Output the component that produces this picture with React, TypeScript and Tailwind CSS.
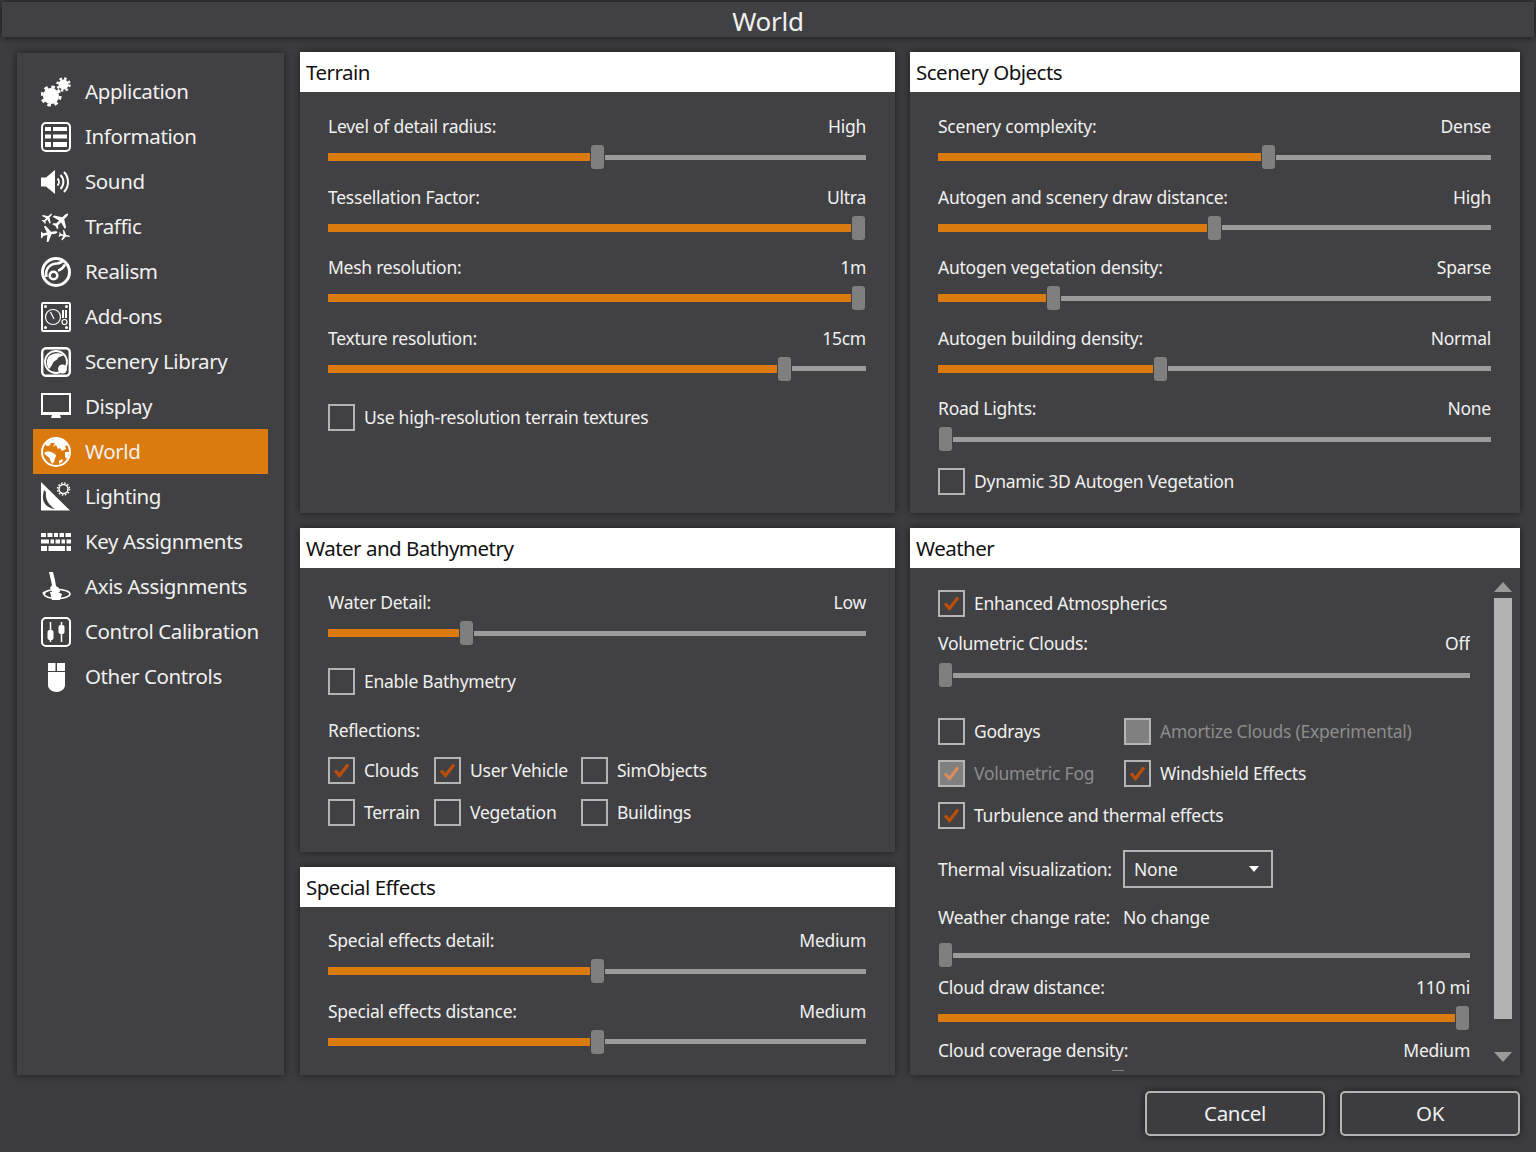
import { ReactNode } from "react";

type Row = { label: string; value: string; fill: number };

const PlaneIcon = ({ x, y, s, r }: { x: number; y: number; s: number; r: number }) => (
    <path
        transform={`translate(${x} ${y}) rotate(${r}) scale(${s})`}
        fill="white"
        d="M0 -9C1 -9 1.3 -7 1.3 -5V-2.5L8.5 2V4L1.3 2V6L3.5 8V9.5L0 8.5L-3.5 9.5V8L-1.3 6V2L-8.5 4V2L-1.3 -2.5V-5C-1.3 -7 -1 -9 0 -9Z"
    />
);

const Svg = ({ children }: { children: ReactNode }) => (
    <svg width="30" height="30" viewBox="0 0 30 30" className="shrink-0">
        {children}
    </svg>
);

const icons: Record<string, ReactNode> = {
    Application: (
        <Svg>
            <circle cx="10" cy="19" r="8" fill="white" />
            <circle cx="10" cy="19" r="9.200" fill="none" stroke="white" strokeWidth="2.800" strokeDasharray="3.600 3.630" />
            <circle cx="22.500" cy="7.500" r="5" fill="white" />
            <circle cx="22.500" cy="7.500" r="6" fill="none" stroke="white" strokeWidth="2.400" strokeDasharray="2.400 2.310" />
        </Svg>
    ),
    Information: (
        <Svg>
            <rect x="1" y="1" width="28" height="28" rx="4" fill="none" stroke="white" strokeWidth="2" />
            <path fill="white" d="M4 5H10V9H4ZM12 5H26V9H12ZM4 12.500H10V16.500H4ZM12 12.500H26V16.500H12ZM4 20H10V25H4ZM12 20H26V25H12Z" />
        </Svg>
    ),
    Sound: (
        <Svg>
            <path fill="white" d="M0 10.500H5L14 3V27L5 19.500H0Z" />
            <g fill="none" stroke="white" strokeWidth="2">
                <path d="M16.500 11.500A5 5 0 0 1 16.500 18.500" />
                <path d="M19.500 8A10 10 0 0 1 19.500 22" />
                <path d="M23 5A14.500 14.500 0 0 1 23 25" />
            </g>
        </Svg>
    ),
    Traffic: (
        <Svg>
            <PlaneIcon x={6.700} y={6} s={0.65} r={45} />
            <PlaneIcon x={20.500} y={8} s={1} r={45} />
            <PlaneIcon x={8} y={21.500} s={0.95} r={80} />
            <PlaneIcon x={23.500} y={23.500} s={0.6} r={100} />
        </Svg>
    ),
    Realism: (
        <Svg>
            <circle cx="15" cy="15" r="13.500" fill="none" stroke="white" strokeWidth="3" />
            <g fill="none" stroke="white" strokeWidth="2.600">
                <path d="M5.500 20C3.500 11 10 6.500 16 6.500C19 6.500 21 5 22.500 3" />
                <path d="M17 13.500C19.500 13 22 11 24 7.500" />
                <circle cx="12.500" cy="18.500" r="3.800" />
            </g>
        </Svg>
    ),
    "Add-ons": (
        <Svg>
            <rect x="1" y="1" width="28" height="28" rx="1" fill="none" stroke="white" strokeWidth="2" />
            <g fill="white">
                <circle cx="4.500" cy="4.500" r="1.500" />
                <circle cx="25.500" cy="4.500" r="1.500" />
                <circle cx="4.500" cy="25.500" r="1.500" />
                <circle cx="25.500" cy="25.500" r="1.500" />
                <rect x="21" y="8" width="2" height="8" />
                <rect x="24" y="8" width="2" height="8" />
            </g>
            <g fill="none" stroke="white" strokeWidth="1.200">
                <circle cx="12" cy="15" r="7.500" />
                <path d="M9.500 10L13 17" />
                <circle cx="23.500" cy="20" r="2.500" />
            </g>
        </Svg>
    ),
    "Scenery Library": (
        <Svg>
            <rect x="1.200" y="1.200" width="27.600" height="27.600" rx="4" fill="none" stroke="white" strokeWidth="2.400" />
            <circle cx="15" cy="15" r="11" fill="none" stroke="white" strokeWidth="1.800" />
            <path fill="white" d="M8 9C12 6 18 5 23 8C21 10 18 9 17 11C16 14 13 13 12 16C11 18 10 20 8 22C5 18 5 13 8 9Z" />
            <circle cx="21.500" cy="22" r="4.500" fill="white" />
        </Svg>
    ),
    Display: (
        <Svg>
            <rect x="1" y="2" width="28" height="19" fill="none" stroke="white" strokeWidth="2" />
            <path fill="white" d="M0 21H30V23H19L20 26H10L11 23H0Z" />
        </Svg>
    ),
    World: (
        <Svg>
            <circle cx="15" cy="15" r="14" fill="none" stroke="white" strokeWidth="2" />
            <g fill="white">
                <path d="M5 6C9 2 15 1 20 2C24 3 26 6 27 8L24 9L25 12L21 14L19 11L17 12L15 8L12 10L14 6L10 6L8 9L5 9Z" />
                <path d="M3 16C5 14 9 14 12 16C15 17 16 19 14 21L13 25L11 27L9 23C9 20 5 19 3 16Z" />
                <path d="M24 15H28C28 18 27 20 26 22L24 20Z" />
                <path d="M18 24L21 22L22 24L18 27Z" />
            </g>
        </Svg>
    ),
    Lighting: (
        <Svg>
            <path fill="white" d="M0 0L29 28.500H0Z" />
            <path fill="#414143" d="M2 13C1 21 6 26 14 27C8 23 4 18 5 10L3 8Z" />
            <circle cx="22.500" cy="7" r="4.500" fill="#414143" stroke="white" strokeWidth="1.500" />
            <circle cx="22.500" cy="7" r="6" fill="none" stroke="white" strokeWidth="1.500" strokeDasharray="1.500 1.640" />
        </Svg>
    ),
    "Key Assignments": (
        <Svg>
            <path
                fill="white"
                d="M0 6H5V10H0ZM6.500 6H11.500V10H6.500ZM13 6H17V10H13ZM18.500 6H23V10H18.500ZM24.500 6H30V10H24.500ZM0 12.500H8V16.500H0ZM9.500 12.500H13V16.500H9.500ZM14.500 12.500H19V16.500H14.500ZM20.500 12.500H24V16.500H20.500ZM25.500 12.500H30V16.500H25.500ZM0 19H6V24H0ZM7.500 19H24V24H7.500ZM25.500 19H30V24H25.500Z"
            />
        </Svg>
    ),
    "Axis Assignments": (
        <Svg>
            <path fill="white" d="M8 0H12L14 8L15 14L18 16L19 20L12 21L9 16L11 13Z" />
            <ellipse cx="16" cy="22" rx="13" ry="4.500" fill="none" stroke="white" strokeWidth="1.500" />
            <path fill="white" d="M9 20L15 19L21 22L19 28L11 28Z" />
            <circle cx="3" cy="21" r="1.500" fill="white" />
        </Svg>
    ),
    "Control Calibration": (
        <Svg>
            <rect x="1" y="1" width="28" height="28" rx="4" fill="none" stroke="white" strokeWidth="2" />
            <path stroke="white" strokeWidth="1.500" d="M9.500 5V25M20.500 5V25" />
            <rect x="6.500" y="13" width="6" height="10" rx="2" fill="white" />
            <rect x="17.500" y="8" width="6" height="9" rx="2" fill="white" />
        </Svg>
    ),
    "Other Controls": (
        <Svg>
            <path fill="white" d="M7 1H14.500V9H7ZM16 1H24V9H16ZM7 10H24V23C24 27 20 30 15.500 30C11 30 7 27 7 23Z" />
        </Svg>
    ),
};

const navItems = [
    "Application",
    "Information",
    "Sound",
    "Traffic",
    "Realism",
    "Add-ons",
    "Scenery Library",
    "Display",
    "World",
    "Lighting",
    "Key Assignments",
    "Axis Assignments",
    "Control Calibration",
    "Other Controls",
];

const terrain: Row[] = [
    { label: "Level of detail radius:", value: "High", fill: 262 },
    { label: "Tessellation Factor:", value: "Ultra", fill: 523 },
    { label: "Mesh resolution:", value: "1m", fill: 523 },
    { label: "Texture resolution:", value: "15cm", fill: 449 },
];

const scenery: Row[] = [
    { label: "Scenery complexity:", value: "Dense", fill: 323 },
    { label: "Autogen and scenery draw distance:", value: "High", fill: 269 },
    { label: "Autogen vegetation density:", value: "Sparse", fill: 108 },
    { label: "Autogen building density:", value: "Normal", fill: 215 },
    { label: "Road Lights:", value: "None", fill: 0 },
];

const effects: Row[] = [
    { label: "Special effects detail:", value: "Medium", fill: 262 },
    { label: "Special effects distance:", value: "Medium", fill: 262 },
];

const Slider = ({ fill }: { fill: number }) => (
    <div className="flex h-[24px] items-center">
        {fill > 0 ? <div className="h-[8px] bg-[#db7a0e]" style={{ width: fill }} /> : null}
        <div className="ml-[1px] h-[24px] w-[13px] shrink-0 rounded-[3px] bg-[#7f7f7f]" />
        <div className="ml-[1px] h-[5px] flex-1 bg-[#9b9b9b]" />
    </div>
);

const LabelRow = ({ label, value }: { label: string; value: string }) => (
    <div className="flex h-[24px] items-center justify-between pb-[2px] leading-[22px]">
        <span>{label}</span>
        <span>{value}</span>
    </div>
);

const SliderRow = ({ label, value, fill }: Row) => (
    <div className="h-[70.5px]">
        <LabelRow label={label} value={value} />
        <div className="mt-[6px]">
            <Slider fill={fill} />
        </div>
    </div>
);

const Check = ({
    label,
    checked,
    disabled,
    className,
}: {
    label: string;
    checked?: boolean;
    disabled?: boolean;
    className?: string;
}) => (
    <div className={`flex h-[27px] items-center ${className ?? ""}`}>
        <div
            className={`flex h-[27px] w-[27px] shrink-0 items-center justify-center border-2 border-[#b4b4b4] ${disabled ? "bg-[#808080]" : ""}`}
        >
            {checked ? (
                <svg width="19" height="17" viewBox="0 0 19 17">
                    <path
                        d="M3 8.500L7.500 13.500L16 2.500"
                        fill="none"
                        stroke={disabled ? "#d78e5c" : "#bb4f0a"}
                        strokeWidth="3.200"
                    />
                </svg>
            ) : null}
        </div>
        <span className={`ml-[9px] ${disabled ? "text-[#8c8c8c]" : ""}`}>{label}</span>
    </div>
);

const Panel = ({
    title,
    className,
    children,
}: {
    title: string;
    className?: string;
    children: ReactNode;
}) => (
    <section className={`flex shrink-0 flex-col overflow-hidden bg-[#414143] shadow-[0_0_8px_rgba(0,0,0,0.55)] ${className ?? ""}`}>
        <h2 className="h-[40px] shrink-0 bg-white pl-[6px] text-[20.500px] leading-[41px] tracking-[-0.5px] text-[#111111]">{title}</h2>
        {children}
    </section>
);

const Arrow = ({ up }: { up?: boolean }) => (
    <svg width="18" height="10" viewBox="0 0 18 10">
        <path fill="#9b9b9b" d={up ? "M9 0L18 10H0Z" : "M9 10L18 0H0Z"} />
    </svg>
);

const App = () => {
    return (
        <div className="flex h-[1152px] w-[1536px] flex-col overflow-hidden bg-[#3d3d3f] font-['Noto_Sans',sans-serif] text-[17.500px] tracking-[-0.25px] text-[#f0f0f0]">
            <header className="mx-[2px] mt-[2px] flex h-[35px] shrink-0 items-center justify-center bg-[#414143] pt-[3px] text-[26px] shadow-[0_0_8px_rgba(0,0,0,0.7)]">
                World
            </header>

            <div className="flex h-[1038px] shrink-0 gap-[15px] pl-[17px] pr-[16px] pt-[15px]">
                <nav className="mr-[1px] mt-[1px] h-[1022px] w-[267px] shrink-0 bg-[#414143] px-[16px] pt-[16px] text-[20.500px] tracking-[-0.4px] shadow-[0_0_8px_rgba(0,0,0,0.55)]">
                    {navItems.map((name) => (
                        <div
                            key={name}
                            className={`flex h-[45px] items-center gap-[14px] pl-[8px] ${name === "World" ? "bg-[#db7a0e]" : ""}`}
                        >
                            {icons[name]}
                            <span>{name}</span>
                        </div>
                    ))}
                </nav>

                <div className="flex w-[595px] shrink-0 flex-col gap-[15px]">
                    <Panel title="Terrain" className="h-[461px]">
                        <div className="pl-[28px] pr-[29px] pt-[23px]">
                            {terrain.map((row) => (
                                <SliderRow key={row.label} {...row} />
                            ))}
                            <Check label="Use high-resolution terrain textures" className="mt-[7px]" />
                        </div>
                    </Panel>

                    <Panel title="Water and Bathymetry" className="h-[324px]">
                        <div className="pl-[28px] pr-[29px] pt-[23px]">
                            <SliderRow label="Water Detail:" value="Low" fill={131} />
                            <Check label="Enable Bathymetry" className="mt-[6px]" />
                            <div className="mt-[23px] h-[24px] leading-[24px]">Reflections:</div>
                            <div className="mt-[15px] grid grid-cols-[106px_147px_1fr] gap-y-[15px]">
                                <Check label="Clouds" checked />
                                <Check label="User Vehicle" checked />
                                <Check label="SimObjects" />
                                <Check label="Terrain" />
                                <Check label="Vegetation" />
                                <Check label="Buildings" />
                            </div>
                        </div>
                    </Panel>

                    <Panel title="Special Effects" className="h-[208px]">
                        <div className="pl-[28px] pr-[29px] pt-[22px]">
                            {effects.map((row) => (
                                <SliderRow key={row.label} {...row} />
                            ))}
                        </div>
                    </Panel>
                </div>

                <div className="flex w-[610px] shrink-0 flex-col gap-[15px]">
                    <Panel title="Scenery Objects" className="h-[461px]">
                        <div className="pl-[28px] pr-[29px] pt-[23px]">
                            {scenery.map((row) => (
                                <SliderRow key={row.label} {...row} />
                            ))}
                            <Check label="Dynamic 3D Autogen Vegetation" />
                        </div>
                    </Panel>

                    <Panel title="Weather" className="h-[547px]">
                        <div className="flex min-h-0 flex-1">
                            <div className="h-[504px] w-[560px] shrink-0 overflow-hidden pl-[28px] pt-[22px]">
                                <Check label="Enhanced Atmospherics" checked />
                                <div className="mt-[15px]">
                                    <LabelRow label="Volumetric Clouds:" value="Off" />
                                </div>
                                <div className="mt-[7px]">
                                    <Slider fill={0} />
                                </div>
                                <div className="mt-[31px] grid grid-cols-[186px_1fr] gap-y-[15px]">
                                    <Check label="Godrays" />
                                    <Check label="Amortize Clouds (Experimental)" disabled />
                                    <Check label="Volumetric Fog" checked disabled />
                                    <Check label="Windshield Effects" checked />
                                    <Check label="Turbulence and thermal effects" checked className="col-span-2" />
                                </div>
                                <div className="mt-[21px] flex items-center">
                                    <span className="w-[185px]">Thermal visualization:</span>
                                    <div className="flex h-[38px] w-[150px] items-center justify-between border-2 border-[#b4b4b4] pl-[9px] pr-[12px]">
                                        <span>None</span>
                                        <svg width="10" height="6" viewBox="0 0 10 6">
                                            <path fill="white" d="M0 0H10L5 6Z" />
                                        </svg>
                                    </div>
                                </div>
                                <div className="mt-[17px] flex h-[24px] items-center">
                                    <span className="w-[185px]">Weather change rate:</span>
                                    <span>No change</span>
                                </div>
                                <div className="mt-[14px]">
                                    <Slider fill={0} />
                                </div>
                                <div className="mt-[9px]">
                                    <LabelRow label="Cloud draw distance:" value="110 mi" />
                                </div>
                                <div className="mt-[6px]">
                                    <Slider fill={517} />
                                </div>
                                <div className="mt-[9px]">
                                    <LabelRow label="Cloud coverage density:" value="Medium" />
                                </div>
                                <div className="ml-[174px] mt-[7px] h-[1px] w-[12px] bg-[#808080]" />
                            </div>
                            <div className="ml-[24px] flex h-[504px] w-[18px] shrink-0 flex-col items-center pt-[14px]">
                                <Arrow up />
                                <div className="mt-[6px] h-[421px] w-[18px] bg-[#b3b3b3]" />
                                <div className="mt-[33px]">
                                    <Arrow />
                                </div>
                            </div>
                        </div>
                    </Panel>
                </div>
            </div>

            <footer className="flex justify-end gap-[15px] pr-[16px] pt-[16px]">
                <button className="h-[45px] w-[180px] rounded-[5px] border-2 border-[#b4b4b4] text-[20.500px] tracking-[-0.3px] shadow-[0_0_8px_rgba(0,0,0,0.55)]">
                    Cancel
                </button>
                <button className="h-[45px] w-[180px] rounded-[5px] border-2 border-[#b4b4b4] text-[20.500px] tracking-[-0.3px] shadow-[0_0_8px_rgba(0,0,0,0.55)]">
                    OK
                </button>
            </footer>
        </div>
    );
};

export default App;
